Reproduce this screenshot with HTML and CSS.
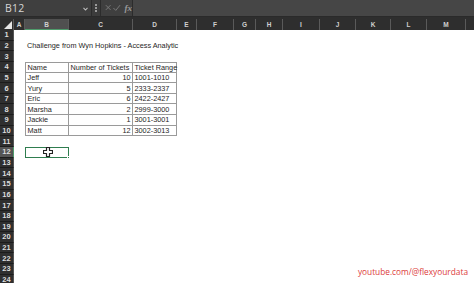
FILE: index.html
```html
<!DOCTYPE html>
<html>
<head>
<meta charset="utf-8">
<link rel="stylesheet" href="styles.css">
</head>
<body>
<div class="app">
  <div class="topbar">
    <div class="namebox"><span class="nb-text">B12</span>
      <svg class="caret" width="5" height="4" viewBox="0 0 5 4"><path d="M0.5 0.8 L2.5 3 L4.5 0.8" fill="none" stroke="#bdbdbd" stroke-width="1.1"/></svg>
    </div>
    <div class="dots"><i></i><i></i><i></i></div>
    <div class="fxbox">
      <svg width="30" height="12" viewBox="0 0 30 12">
        <path d="M4 3 L9 8 M9 3 L4 8" stroke="#7a7a7a" stroke-width="1" fill="none"/>
        <path d="M12 6 L14.5 8.5 L19 3" stroke="#7a7a7a" stroke-width="1" fill="none"/>
      </svg>
      <span class="fx">fx</span>
    </div>
    <div class="formula"></div>
  </div>
  <div class="colheads">
    <div class="corner"><svg width="8" height="8" viewBox="0 0 8 8"><path d="M8 0 L8 8 L0 8 Z" fill="#e6e6e6"/></svg></div>
    <div class="ch">A</div>
    <div class="ch sel">B</div>
    <div class="ch">C</div>
    <div class="ch">D</div>
    <div class="ch">E</div>
    <div class="ch">F</div>
    <div class="ch">G</div>
    <div class="ch">H</div>
    <div class="ch">I</div>
    <div class="ch">J</div>
    <div class="ch">K</div>
    <div class="ch">L</div>
    <div class="ch">M</div>
    <div class="ch last"></div>
  </div>
  <div class="grid">
    <div class="rh">1</div><div class="rest1"></div>
    <div class="rh">2</div><div class="ca"></div><div class="title">Challenge from Wyn Hopkins - Access Analytic</div>
    <div class="rh">3</div><div class="rest1"></div>
    <div class="rh">4</div><div class="ca"></div><div class="td tb tl top">Name</div><div class="td tc top">Number of Tickets</div><div class="td td3 top">Ticket Range</div><div class="rest6"></div>
    <div class="rh">5</div><div class="ca"></div><div class="td tb tl">Jeff</div><div class="td tc num">10</div><div class="td td3">1001-1010</div><div class="rest6"></div>
    <div class="rh">6</div><div class="ca"></div><div class="td tb tl">Yury</div><div class="td tc num">5</div><div class="td td3">2333-2337</div><div class="rest6"></div>
    <div class="rh">7</div><div class="ca"></div><div class="td tb tl">Eric</div><div class="td tc num">6</div><div class="td td3">2422-2427</div><div class="rest6"></div>
    <div class="rh">8</div><div class="ca"></div><div class="td tb tl">Marsha</div><div class="td tc num">2</div><div class="td td3">2999-3000</div><div class="rest6"></div>
    <div class="rh">9</div><div class="ca"></div><div class="td tb tl">Jackie</div><div class="td tc num">1</div><div class="td td3">3001-3001</div><div class="rest6"></div>
    <div class="rh">10</div><div class="ca"></div><div class="td tb tl">Matt</div><div class="td tc num">12</div><div class="td td3">3002-3013</div><div class="rest6"></div>
    <div class="rh">11</div><div class="rest1"></div>
    <div class="rh rsel">12</div><div class="ca"></div><div class="selcell"><svg class="cursor" width="10" height="10" viewBox="0 0 10 10"><path d="M3.5 0.5 H6.5 V3.5 H9.5 V6.5 H6.5 V9.5 H3.5 V6.5 H0.5 V3.5 H3.5 Z" fill="#fff" stroke="#222" stroke-width="1.2" stroke-linejoin="round"/></svg><span class="handle"></span></div><div class="rest4"></div>
    <div class="rh">13</div><div class="rest1"></div>
    <div class="rh">14</div><div class="rest1"></div>
    <div class="rh">15</div><div class="rest1"></div>
    <div class="rh">16</div><div class="rest1"></div>
    <div class="rh">17</div><div class="rest1"></div>
    <div class="rh">18</div><div class="rest1"></div>
    <div class="rh">19</div><div class="rest1"></div>
    <div class="rh">20</div><div class="rest1"></div>
    <div class="rh">21</div><div class="rest1"></div>
    <div class="rh">22</div><div class="rest1"></div>
    <div class="rh">23</div><div class="rest1"></div>
    <div class="rh">24</div><div class="rest1"></div>
  </div>
  <div class="watermark">youtube.com/@flexyourdata</div>
</div>
</body>
</html>
```
FILE: styles.css
```css
* { box-sizing: border-box; }
html, body { margin: 0; padding: 0; }
body { width: 474px; height: 283px; overflow: hidden; background: #ffffff; font-family: "Liberation Sans", Arial, sans-serif; }
.app { position: relative; width: 474px; height: 283px; overflow: hidden; }

.topbar { height: 17px; background: #3c3c3c; display: flex; align-items: stretch; border-bottom: 1px solid #2a2a2a; }
.namebox { width: 92px; background: #3f3f3f; border-right: 1px solid #2c2c2c; display: flex; align-items: center; justify-content: space-between; padding: 0 3px 0 5px; }
.nb-text { color: #d6d6d6; font-size: 10.5px; font-family: "Open Sans", "Liberation Sans", sans-serif; letter-spacing: 0.2px; }
.caret { margin-top: 2px; }
.dots { width: 8px; display: flex; flex-direction: column; align-items: center; justify-content: center; gap: 1.5px; }
.dots i { display: block; width: 1.5px; height: 1.5px; background: #9a9a9a; }
.fxbox { width: 33px; background: #3f3f3f; border-left: 1px solid #2c2c2c; border-right: 1px solid #2c2c2c; display: flex; align-items: center; padding-left: 1px; }
.fx { color: #9a9a9a; font-family: "Liberation Serif", serif; font-style: italic; font-size: 9px; font-weight: bold; margin-left: -6px; }
.formula { flex: 1; background: #464646; }

.colheads { height: 13px; background: #2e2e2e; display: grid; grid-template-columns: 14px 11px 44px 64px 44px 20px 37px 22px 27px 37px 36px 35px 36px 39px 8px; padding-top: 2px; }
.corner { display: flex; align-items: flex-end; justify-content: flex-end; padding: 0 1px 1px 0; border-right: 1px solid #5a5a5a; }
.ch { color: #d0d0d0; font-size: 6.5px; font-weight: bold; display: flex; align-items: center; justify-content: center; border-right: 1px solid #5a5a5a; }
.ch.sel { background: #505050; border-bottom: 1.5px solid #4f9c6c; }
.ch.last { border-right: none; }

.grid { display: grid; grid-template-columns: 14px 11px 44px 64px 44px 20px 37px 22px 27px 37px 36px 35px 36px 39px 8px; grid-auto-rows: 10.65px; }
.rh { background: #2f2f2f; color: #dcdcdc; font-size: 7.5px; font-weight: bold; display: flex; align-items: center; justify-content: center; border-bottom: 1px solid #1c1c1c; border-right: 1px solid #555; }
.rh.rsel { background: #555555; border-right: 1.5px solid #4f9c6c; }
.rest1 { grid-column: 2 / -1; }
.rest6 { grid-column: 6 / -1; }
.rest4 { grid-column: 4 / -1; }
.title { grid-column: 3 / -1; font-size: 7.3px; color: #262626; display: flex; align-items: center; padding-left: 2px; white-space: nowrap; }
.td { font-size: 7.3px; color: #262626; display: flex; align-items: center; padding: 0 1.5px; white-space: nowrap; border-right: 1px solid #9a9a9a; border-bottom: 1px solid #9a9a9a; }
.td.tl { border-left: 1px solid #9a9a9a; }
.td.top { border-top: 1px solid #9a9a9a; }
.td.num { justify-content: flex-end; }
.selcell { position: relative; border: 1.5px solid #2f7d4f; display: flex; align-items: center; justify-content: center; }
.cursor { margin-left: 1px; }
.handle { position: absolute; right: -2px; bottom: -2px; width: 3px; height: 3px; background: #2f7d4f; border: 0.5px solid #fff; }

.watermark { position: absolute; right: 6px; bottom: 6px; color: #dc3b3b; font-family: "Open Sans", "Liberation Sans", sans-serif; font-size: 8.3px; }
```
